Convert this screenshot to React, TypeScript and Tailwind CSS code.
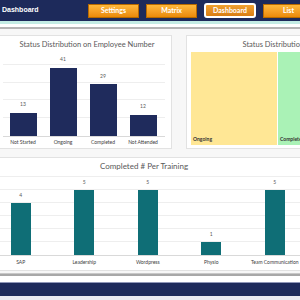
import React from "react";

const statusData = [
  { label: "Not Started", value: 13 },
  { label: "Ongoing", value: 41 },
  { label: "Completed", value: 29 },
  { label: "Not Attended", value: 12 },
];

const trainingData = [
  { label: "SAP", value: 4 },
  { label: "Leadership", value: 5 },
  { label: "Wordpress", value: 5 },
  { label: "Physio", value: 1 },
  { label: "Team Communication", value: 5 },
];

function NavButton({ label, active }: { label: string; active?: boolean }) {
  return (
    <div
      className={
        active
          ? "h-[15px] w-[52px] shrink-0 rounded-[3px] border-2 border-white bg-gradient-to-b from-[#f0a030] to-[#d87d12] flex items-center justify-center text-[7px] font-bold text-white"
          : "h-[14px] w-[51px] shrink-0 border border-[#b86a00] bg-gradient-to-b from-[#ffb83a] to-[#ea8a06] flex items-center justify-center text-[7px] font-bold text-white"
      }
    >
      {label}
    </div>
  );
}

export default function App() {
  return (
    <div className="w-[300px] h-[300px] overflow-hidden bg-[#f7f7f7] font-['Lato',sans-serif]">
      {/* Header */}
      <div className="h-[21px] bg-[#1d2a5b] flex items-center">
        <span className="w-[88px] shrink-0 pl-[2px] text-[7px] font-bold text-white font-['Liberation_Sans',sans-serif]">Dashboard</span>
        <div className="flex items-center gap-[7px] shrink-0">
          <NavButton label="Settings" />
          <NavButton label="Matrix" />
          <NavButton label="Dashboard" active />
          <NavButton label="List" />
        </div>
      </div>
      <div className="h-[3px] bg-[#c3ece4]" />
      <div className="h-[3px] bg-white" />
      <div className="h-[2px] bg-[#b5b5b5]" />

      <div className="w-[340px] -ml-[12px] pt-[6px] flex flex-col gap-[8px]">
        {/* Top row */}
        <div className="flex gap-[14px] h-[114px]">
          {/* Left chart card */}
          <div className="w-[184px] shrink-0 bg-white border border-[#e2e2e2] flex flex-col pl-[14px] pr-[6px]">
            <div className="h-[17px] pt-[3px] text-center text-[7.5px] text-[#595959] whitespace-nowrap pl-[6px]">
              Status Distribution on Employee Number
            </div>
            <div className="relative h-[80px] mt-[3px]">
              {[10, 20, 30, 40].map((g) => (
                <div key={g} className="absolute left-0 right-0 h-px bg-[#eeeeee]" style={{ bottom: (g * 80) / 45 }} />
              ))}
              <div className="absolute inset-0 flex">
                {statusData.map((d) => (
                  <div key={d.label} className="w-[40px] flex flex-col items-center justify-end">
                    <span className="text-[5px] text-[#595959] mb-[4px]">{d.value}</span>
                    <div className="w-[27px] bg-[#1f2b5c]" style={{ height: (d.value * 80) / 45 }} />
                  </div>
                ))}
              </div>
            </div>
            <div className="flex border-t border-[#d9d9d9]">
              {statusData.map((d) => (
                <div key={d.label} className="w-[40px] pt-[2px] text-center text-[5px] text-[#404040] whitespace-nowrap">
                  {d.label}
                </div>
              ))}
            </div>
          </div>

          {/* Treemap card */}
          <div className="w-[232px] shrink-0 bg-white border border-[#e2e2e2] flex flex-col px-[4px] pb-[3px]">
            <div className="h-[16px] pt-[3px] pl-[16px] text-center text-[7.5px] text-[#595959] whitespace-nowrap">
              Status Distribution on Employee Number
            </div>
            <div className="flex-1 flex">
              <div className="w-[86px] bg-[#ffe795] flex items-end px-[2px] pb-[2px]">
                <span className="text-[5px] font-bold text-[#333333]">Ongoing</span>
              </div>
              <div className="w-[70px] bg-[#aaf2b6] border-l border-white flex items-end px-[2px] pb-[2px]">
                <span className="text-[5px] font-bold text-[#333333]">Completed</span>
              </div>
              <div className="flex-1 bg-[#9fd9f5] border-l border-white" />
            </div>
          </div>
        </div>

        {/* Bottom card */}
        <div className="h-[114px] bg-white border border-[#e2e2e2] flex flex-col">
          <div className="h-[17px] pt-[2px] text-center text-[8px] text-[#595959] -ml-[28px]">
            Completed # Per Training
          </div>
          <div className="relative h-[78px] mt-[2px]">
            {[1, 2, 3, 4, 5, 6].map((g) => (
              <div key={g} className="absolute left-0 right-0 h-px bg-[#eeeeee]" style={{ bottom: g * 13 }} />
            ))}
            <div className="absolute inset-0 flex">
              {trainingData.map((d) => (
                <div key={d.label} className="w-[63.5px] flex flex-col items-center justify-end">
                  <span className="text-[5px] text-[#595959] mb-[4px]">{d.value}</span>
                  <div className="w-[20px] bg-[#0f6e76]" style={{ height: d.value * 13 }} />
                </div>
              ))}
            </div>
          </div>
          <div className="flex border-t border-[#d9d9d9]">
            {trainingData.map((d) => (
              <div key={d.label} className="w-[63.5px] pt-[3px] text-center text-[5px] text-[#404040] whitespace-nowrap">
                {d.label}
              </div>
            ))}
          </div>
        </div>
      </div>

      {/* Footer */}
      <div className="mt-[2px] h-[1px] bg-[#c8c8c8]" />
      <div className="h-[2px] bg-[#a8a8a8]" />
      <div className="h-[6px] bg-white" />
      <div className="h-[14px] bg-[#1d2a5b] border-t border-[#8f96b8]" />
      <div className="h-[10px] bg-[#e9eaf2]" />
    </div>
  );
}
